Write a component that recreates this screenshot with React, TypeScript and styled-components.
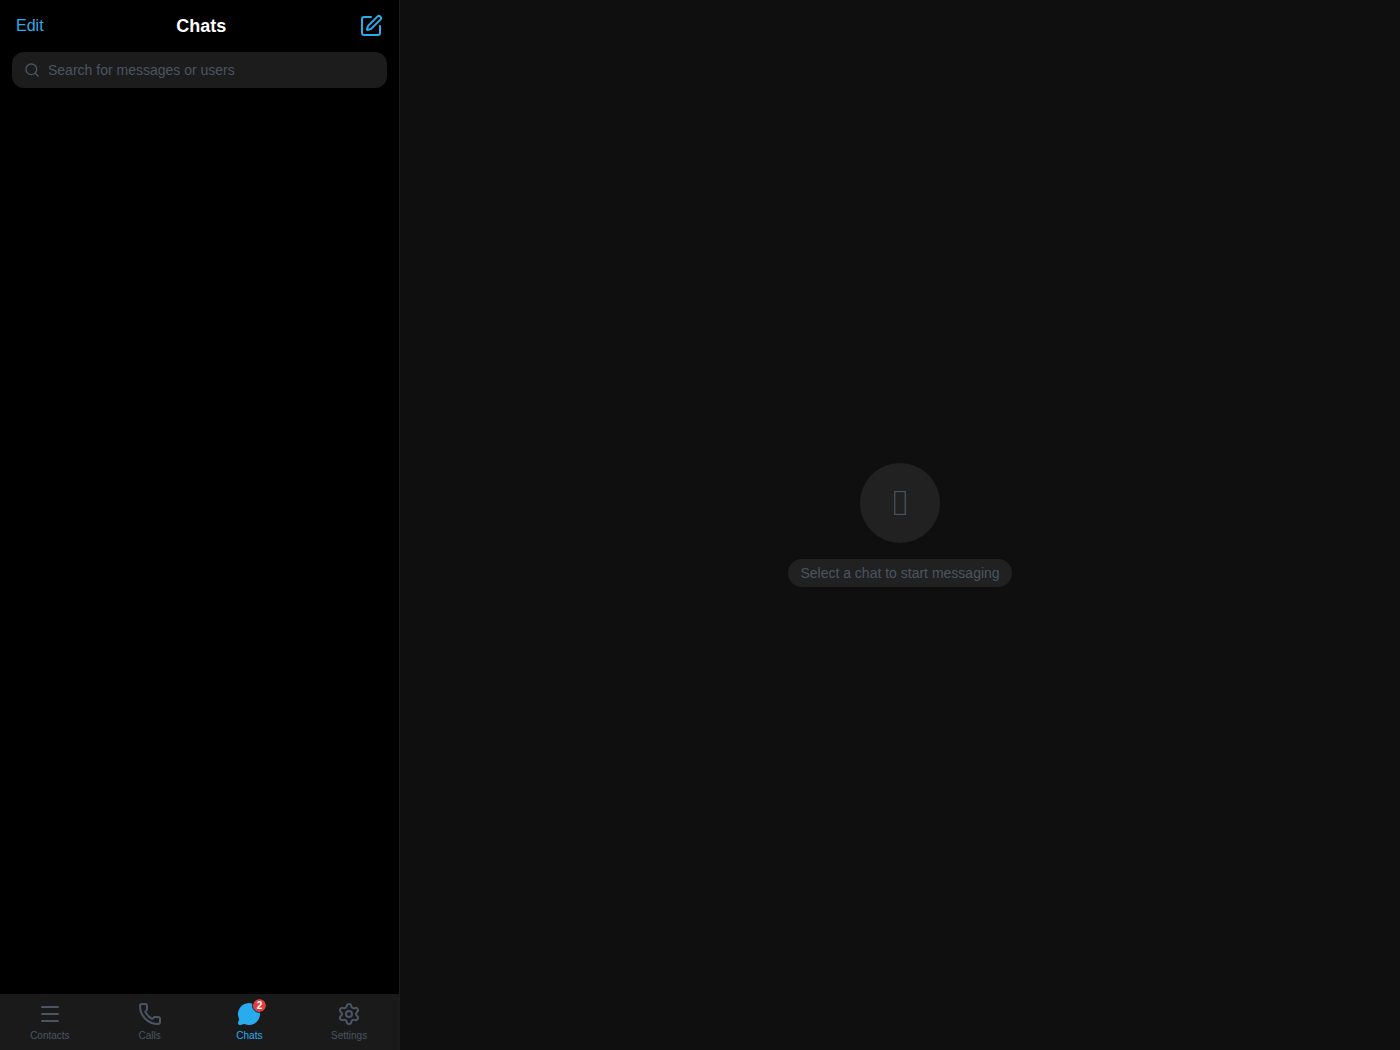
import React, { useState } from "react";
import styled, { createGlobalStyle } from "styled-components";
import { Menu, MessageCircle, Phone, Search, Settings, SquarePen } from "lucide-react";

const accent = "#2aabee";
const muted = "#4b5563";
const surface = "#1c1c1d";
const barSurface = "#1a1a1b";

const GlobalStyle = createGlobalStyle`
  * { box-sizing: border-box; }
  body {
    margin: 0;
    background: #0f0f0f;
    color: #ffffff;
    font-family: "Liberation Sans", Arial, sans-serif;
  }
  button, input { font-family: inherit; }
`;

const Layout = styled.div`
  display: flex;
  height: 100vh;
`;

const Sidebar = styled.aside`
  display: flex;
  flex-direction: column;
  flex: 0 0 400px;
  background: #000000;
  border-right: 1px solid ${surface};
`;

const Header = styled.header`
  display: flex;
  align-items: center;
  justify-content: space-between;
  padding: 12px 16px;
  height: 52px;
`;

const TextButton = styled.button`
  display: flex;
  padding: 0;
  border: 0;
  background: none;
  color: ${accent};
  font-size: 16px;
  line-height: 24px;
  cursor: pointer;
`;

const Title = styled.h1`
  margin: 0;
  font-size: 18px;
  line-height: 28px;
  font-weight: 700;
`;

const SearchBar = styled.label`
  display: flex;
  align-items: center;
  gap: 8px;
  height: 36px;
  margin: 0 12px;
  padding: 0 12px;
  border-radius: 12px;
  background: ${surface};
  color: ${muted};
`;

const SearchInput = styled.input`
  flex: 1;
  min-width: 0;
  padding: 0;
  border: 0;
  outline: 0;
  background: none;
  color: #ffffff;
  font-size: 14px;
  line-height: 20px;

  &::placeholder { color: ${muted}; opacity: 1; }
`;

const ChatList = styled.div`
  flex: 1;
  overflow-y: auto;
`;

const TabBar = styled.nav`
  display: grid;
  grid-template-columns: repeat(4, 1fr);
  height: 56px;
  padding: 8px 0;
  background: ${barSurface};
`;

const Tab = styled.button<{ $active: boolean }>`
  display: flex;
  flex-direction: column;
  align-items: center;
  gap: 2px;
  padding: 0;
  border: 0;
  background: none;
  color: ${(p) => (p.$active ? accent : muted)};
  font-size: 10px;
  line-height: 15px;
  cursor: pointer;
`;

const TabIcon = styled.span`
  position: relative;
  display: flex;
`;

const Badge = styled.span`
  position: absolute;
  top: -4px;
  right: -6px;
  padding: 0 4px;
  border: 1px solid ${barSurface};
  border-radius: 8px;
  background: #e53e3e;
  background-clip: padding-box;
  color: #ffffff;
  font-size: 10px;
  line-height: 13px;
  font-weight: 700;
  text-align: center;
`;

const Main = styled.main`
  display: flex;
  flex: 1;
  flex-direction: column;
  align-items: center;
  justify-content: center;
  gap: 16px;
  background: #0f0f0f;
  color: ${muted};
`;

const Emblem = styled.div`
  display: flex;
  align-items: center;
  justify-content: center;
  width: 80px;
  height: 80px;
  border-radius: 50%;
  background: #212121;
`;

const Hint = styled.p`
  margin: 0;
  padding: 4px 12px;
  border-radius: 14px;
  background: #212121;
  font-size: 14px;
  line-height: 20px;
`;

const tabs = [
  { name: "Contacts", Icon: Menu },
  { name: "Calls", Icon: Phone },
  { name: "Chats", Icon: MessageCircle, filled: true, unread: 2 },
  { name: "Settings", Icon: Settings },
];

export default function App() {
  const [active, setActive] = useState("Chats");
  const [query, setQuery] = useState("");

  return (
    <>
      <GlobalStyle />
      <Layout>
        <Sidebar>
          <Header>
            <TextButton type="button">Edit</TextButton>
            <Title>Chats</Title>
            <TextButton type="button" aria-label="New message">
              <SquarePen size={24} />
            </TextButton>
          </Header>
          <SearchBar>
            <Search size={16} />
            <SearchInput
              type="text"
              aria-label="Search"
              placeholder="Search for messages or users"
              value={query}
              onChange={(e) => setQuery(e.target.value)}
            />
          </SearchBar>
          <ChatList />
          <TabBar>
            {tabs.map(({ name, Icon, filled, unread }) => (
              <Tab key={name} type="button" $active={active === name} onClick={() => setActive(name)}>
                <TabIcon>
                  <Icon size={24} fill={filled ? "currentColor" : "none"} />
                  {unread && <Badge>{unread}</Badge>}
                </TabIcon>
                {name}
              </Tab>
            ))}
          </TabBar>
        </Sidebar>
        <Main>
          <Emblem>
            <svg width="12" height="24" viewBox="0 0 12 24" fill="none" stroke="currentColor" aria-hidden="true">
              <rect x="0.75" y="0.5" width="10.5" height="23" strokeWidth="1.2" />
            </svg>
          </Emblem>
          <Hint>Select a chat to start messaging</Hint>
        </Main>
      </Layout>
    </>
  );
}
